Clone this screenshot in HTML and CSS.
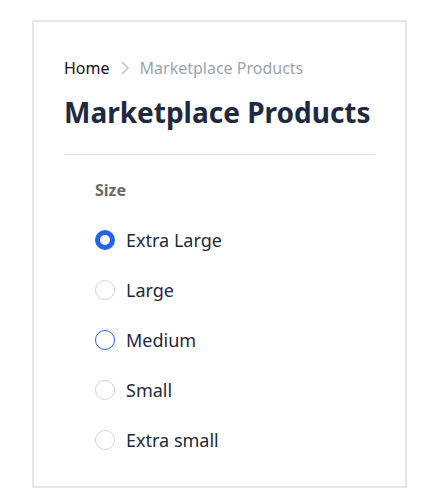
FILE: index.html
```html
<!DOCTYPE html>
<html>
<head>
<meta charset="utf-8">
<link rel="stylesheet" href="styles.css">
</head>
<body>
<div class="card">
  <nav class="crumbs">
    <span class="crumb-home">Home</span>
    <svg class="chev" width="10" height="16" viewBox="0 0 10 16"><path d="M2 2 L8 8 L2 14" fill="none" stroke="#c4c4c4" stroke-width="1.6"/></svg>
    <span class="crumb-cur">Marketplace Products</span>
  </nav>
  <h1 class="title">Marketplace Products</h1>
  <hr class="divider">
  <div class="group">
    <div class="group-label">Size</div>
    <div class="option"><span class="radio checked"></span><span class="opt-label">Extra Large</span></div>
    <div class="option"><span class="radio"></span><span class="opt-label">Large</span></div>
    <div class="option"><span class="radio focus"></span><span class="opt-label">Medium</span></div>
    <div class="option"><span class="radio"></span><span class="opt-label">Small</span></div>
    <div class="option"><span class="radio"></span><span class="opt-label">Extra small</span></div>
  </div>
</div>
</body>
</html>
```
FILE: styles.css
```css
html, body { margin: 0; padding: 0; background: #fff; }
body { font-family: "Noto Sans", "Open Sans", sans-serif; }
.card {
  box-sizing: border-box;
  margin: 20px 0 0 32px;
  width: 375px;
  height: 468px;
  border: 2px solid #e5e7eb;
  padding: 34px 30px 0 30px;
}
.crumbs { display: flex; align-items: center; height: 24px; font-size: 16px; }
.crumb-home { color: #111; }
.chev { margin: 0 10px 0 10px; }
.crumb-cur { color: #9ca3af; }
.title {
  margin: 12px 0 0 0;
  font-size: 28px;
  line-height: 40px;
  font-weight: 700;
  color: #1f2940;
}
.divider { border: 0; border-top: 1px solid #e5e7eb; margin: 22px 0 0 0; }
.group { padding-left: 31px; margin-top: 23px; }
.group-label { font-size: 16px; font-weight: 700; color: #6b6b6b; line-height: 24px; }
.option { display: flex; align-items: center; height: 50px; }
.group-label + .option { margin-top: 13px; }
.radio {
  box-sizing: border-box;
  width: 20px; height: 20px; border-radius: 50%;
  border: 1px solid #d1d5db;
  background: #fff;
  flex: none;
}
.radio.checked { border: 5px solid #2563eb; }
.radio.focus { border-color: #2563eb; }
.opt-label { margin-left: 11px; font-size: 18px; color: #1f2940; }
```
